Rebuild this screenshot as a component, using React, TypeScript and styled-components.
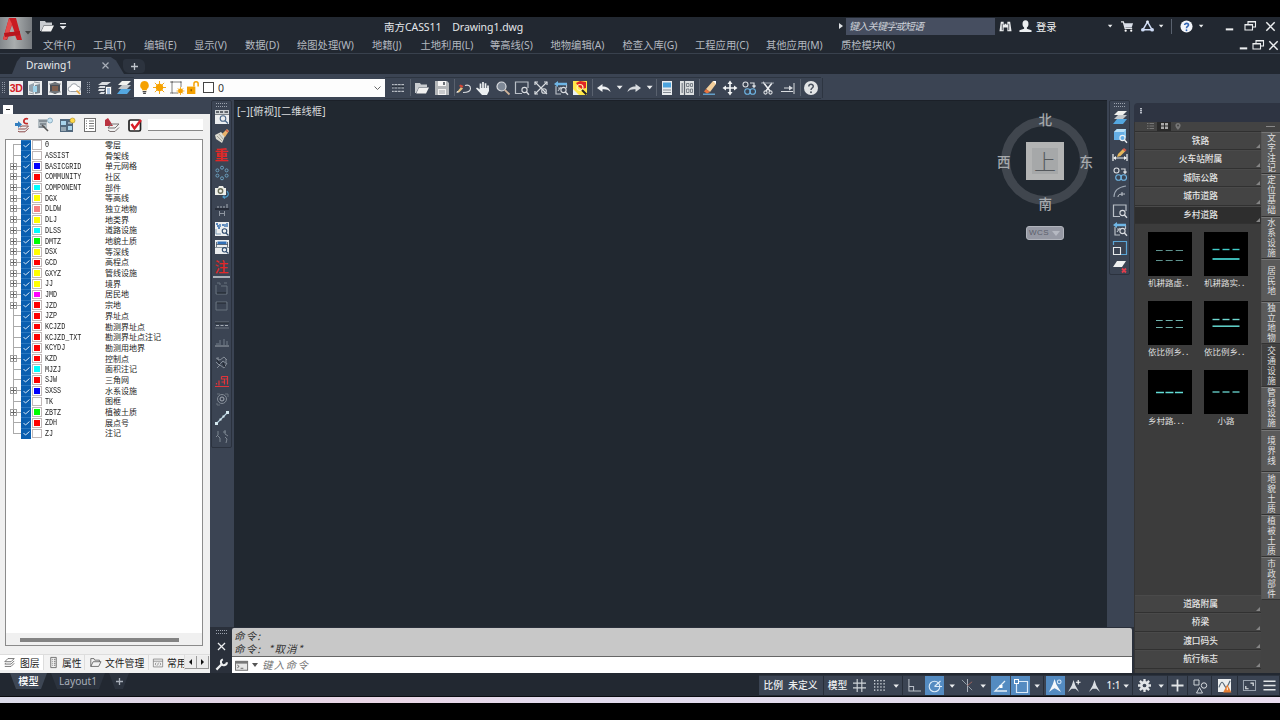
import React from "react";
import styled, { createGlobalStyle } from "styled-components";

const SANS = `"Noto Sans", "Noto Sans CJK SC", sans-serif`;
const CJK = `"Noto Sans CJK SC", sans-serif`;
const SLATE = "#3b4453";
const DARK = "#222831";

const Global = createGlobalStyle`
  * { box-sizing: border-box; }
  body { margin: 0; background: #000; overflow: hidden; font-family: ${SANS}; }
  svg { display: block; flex: none; overflow: visible; }
`;

/* ---------- icons, drawn on a 14 x 14 grid ---------- */
const W = "#d9dce0";
const B = "#6fb6e6";
const line = (d: string, c = W, w = 1.2) => <path d={d} fill="none" stroke={c} strokeWidth={w} />;
const solid = (d: string, c = W) => <path d={d} fill={c} />;
const ring = (x: number, y: number, r: number, c = W, w = 1.1) => (
  <circle cx={x} cy={y} r={r} fill="none" stroke={c} strokeWidth={w} />
);
const paper = <rect x="0" y="0" width="14" height="14" fill="#eceeef" />;
const lens = (c = W) => (
  <>
    {ring(9.5, 9, 2.6, c)}
    {line("M11.4 11L14 13.8", c, 1.4)}
  </>
);

const ICONS: Record<string, React.ReactNode> = {
  cube: <>{paper}{solid("M1 4L6 2V12L1 10Z", "#96a3ad")}{solid("M7 4l5-1v9l-5 1z", "#7b8892")}{solid("M5 5h4v6H5z", "#9ed3ea")}{line("M6 1l6 1M1 12l5 1", "#777f86", 0.8)}</>,
  block: <>{paper}{solid("M2 3l5-2 5 2v8l-5 2-5-2z", "#4b5057")}{solid("M4 5h6v5H4z", "#80604f")}{line("M1 3h12M1 11h12", "#969a9e")}</>,
  cloud: <>{paper}<path d="M3.5 10.5a2.4 2.4 0 010-4.8 3.6 3.6 0 017-.4 2.6 2.6 0 01.6 5.2z" fill="#fff" stroke="#9aa0a8" />{line("M9.5 9.5L13 13", "#e7a63a", 1.6)}</>,
  layerDoc: <>{solid("M4 1h9l-4 3H0z")}{solid("M2 5h7l-2 2H0z")}{solid("M1 8h6l-1 2H0z")}{solid("M3 11h4l-1 2H1z")}<rect x="7.5" y="5.5" width="6" height="8" fill="#fff" stroke="#555d68" />{line("M9 8h3M9 10h3M9 12h3", "#3f79b8", 0.9)}</>,
  layers: <>{solid("M5 0h9l-4 4H1z", "#f0f1ee")}{solid("M5 4h9l-4 4H1z", "#c3c8cb")}{solid("M4 8h10l-4 5H0z", "#54a7e0")}</>,
  rows: <>{line("M0 3h14M0 7h14M0 11h14", "#b8bdc4", 1.3)}{line("M0 5h14", "#20262f", 1)}{line("M2.5 1v12M6.5 1v12M10.5 1v12", SLATE, 0.8)}</>,
  open: <>{solid("M0 2h5l1 1.5h6V6H4L1 12H0z", "#c9ccd0")}{solid("M4 6.5h10L11 12.5H1.2z", "#f1f1f1")}</>,
  save: <>{solid("M0 0h12l2 2v12H0z", "#b4b7ba")}{solid("M3 0h8v5H3z", "#f6f6f6")}{solid("M8 1h2v3H8z", "#6d7278")}{solid("M3 8h8v6H3z", "#f2f2f2")}{line("M4 10h6M4 12h6", "#8f9398", 0.8)}</>,
  undoPencil: <>{line("M6 11.500c5 0 7.500-1 7.500-4S11 3.500 8 4.500", W, 1.1)}{solid("M0 11l4-5 2 1.5-4 4z", "#e7c584")}{solid("M2 5l1.5-1.5 3 1.5L5 7z", "#d64636")}{solid("M0 10l2 1-2.500 1z", "#fff")}</>,
  hand: <>{line("M4.500 9V2.500M7 8V1M9.500 8V2.200M12 9V4.500", "#eceff1", 1.7)}{solid("M1 6.500l3 2L5 7h8v3l-2 4H6L0 7.500z", "#eceff1")}</>,
  zoom: <><circle cx="5.500" cy="5.500" r="4.500" fill="#7e8896" stroke={W} strokeWidth="1.2" />{line("M8.800 8.800L13.500 13.500", "#d0b49a", 1.8)}</>,
  zoomBox: <>{line("M7 12.500H.5V1h12.500v6", "#b9bfc7")}{lens()}</>,
  zoomAll: <>{line("M1 1l12 12M13 1L1 13")}{line("M1 4V1h3M10 1h3v3M1 10v3h3")}{ring(10, 10, 2.3)}</>,
  zoomPrev: <>{line("M2 5v8h5M12.500 3v4M4 10l3-4M4 7h3", "#b9bfc7")}{solid("M0 3l4-3v1.800h9v2.400H4V6z", B)}{lens()}</>,
  zoomRed: <>{solid("M0 0h14v14H0z", "#ffe84a")}{solid("M3 2l4-2 6 1v6l-4 1-3-2z", "#e02525")}{ring(7, 6.500, 3, "#fff3b0", 1.200)}{line("M9 9l4.500 4.500", "#222", 2)}{solid("M0 8l6 6H0z", "#e9f0f4")}</>,
  undo: solid("M0 7l5.500-4v2.500c4 0 7 1.500 8 5.500-2-2.500-4.500-3-8-2.800V11z", "#eef0f2"),
  redo: solid("M14 7L8.500 3v2.500c-4 0-7 1.500-8 5.500 2-2.500 4.500-3 8-2.800V11z", "#d8dbdf"),
  tri: solid("M4 5.200h6.400L7.200 9z", "#eceef0"),
  calc: <>{solid("M2 0h10v14H2z", "#e9ecee")}{solid("M3 1.500h8v5H3z", "#4ca3dd")}{line("M3 9h8M3 11.500h8", "#838a92", 1)}</>,
  sheet: <>{solid("M0 0h14v14H0z", "#dde0e2")}{line("M4.500 0v14", "#59606a")}{line("M2.200 2v10", "#8a9098", 1.500)}<path d="M6.500 2.500h2.500v3H6.500zM10.500 2.500h2v3h-2zM6.500 8h2.500v3.500H6.500zM10.500 8h2v3.500h-2z" fill="none" stroke="#626973" strokeWidth=".8" /></>,
  pencil: <>{solid("M3 8l7-8h3v3L7 11z", "#f3cf9b")}{solid("M3 8l4 3-3 1.500-3-2z", "#e8733e")}{solid("M10 0h3v3z", "#fff")}{line("M0 13.200h12", B, 1.200)}</>,
  move: <>{line("M7 1v12M1 7h12", "#f2f4f5", 1.600)}{solid("M7-.5L9.500 3h-5zM7 14.500L4.500 11h5zM-.5 7L3 4.500v5zM14.500 7L11 4.500v5z", "#f2f4f5")}</>,
  copy: <>{ring(3.500, 3.500, 2.500)}{line("M8 2h4v4M10.500 4.500L12 6.300l1.500-1.800")}{ring(5.500, 10.500, 2.800, B)}{ring(10.700, 10.500, 2.800, B)}</>,
  cut: <>{line("M2 1l7 9M11 2L5 10", "#eef0f2", 1.500)}{ring(4.500, 11.500, 1.600)}{ring(9.500, 11.500, 1.600)}{line("M0 2h13", "#9aa1ab", 1)}</>,
  extend: <>{line("M0 10.500h12M13 2v11", W, 1)}{line("M3 7h7", W, 1)}{solid("M8 4.500l4 2.500-4 2.500z")}</>,
  help: <><circle cx="7" cy="7" r="7" fill="#e2e4e6" />{line("M4.800 5.500c0-3 4.600-2.800 4.500-.2C9.200 7 7 7 7 9", "#4b5360", 1.500)}<circle cx="7" cy="11.200" r="1" fill="#4b5360" /></>,
  codeLens: <>{paper}{solid("M0 0h14v4H0z", "#d0d4d6")}{line("M1 2h3M5 2h3M9.500 2H13", "#3c4149", 1.600)}{line("M0 4.500h14", "#4a5058", 0.7)}{ring(8, 8.500, 2.800, "#4a6788")}{line("M10 10.500l3 3", "#4a6788", 1.300)}</>,
  brush: <>{solid("M0 6l6-3 4 4-3 7-6-4z", "#dcdad0")}{solid("M7 5l5-5 2 2-4 6z", "#eab26b")}{line("M11 1l2 2", "#d65b4a", 1.600)}{line("M2 7l5 5M4 5l4 5", "#95938a", 0.8)}</>,
  dots: <>{[0, 60, 120, 180, 240, 300].map(a => <circle key={a} cx={7 + 5.300 * Math.sin(a * Math.PI / 180)} cy={7 - 5.300 * Math.cos(a * Math.PI / 180)} r="1.500" fill="none" stroke="#6ba0bf" />)}</>,
  camera: <>{solid("M0 3h3l1-2h4l1 2h2v7H0z", "#eff0ea")}{ring(5.500, 6, 2.200, "#6b6f5c", 1.400)}{line("M12 6c3 4 0 7-4 6M9.500 10.500L8 12l2 1.500", "#4e9bc9", 1.200)}</>,
  ruler: <>{line("M0 6h14", "#20252e", 1.400)}{line("M3 3v2M6 3v2M9 3v2M12 1v4", "#a6acb5", 1)}{line("M4.500 8v5M9.500 8v5M5 10.500h4", "#8e95a0", 1)}</>,
  mapA: <>{paper}{line("M1 2h2M2 4h2M5 2v3M7 3h2M10 2v3M12 1v4M3 6h2", "#2b66ab", 1.300)}{line("M1 7v5h5", "#7e9cb6", 1)}{ring(9.500, 9, 2.300, "#304c6d")}{line("M11 11l2.500 2.500", "#304c6d")}</>,
  mapB: <>{paper}{solid("M2.500 1.500h9v3h-9z", "#3270b7")}{line("M1 4.500h12M1.500 2v5M12.500 2v5", "#4a5663", 0.8)}{line("M0 7.500h14", "#6e7a83", 0.8)}{ring(9.500, 9.800, 2.200, "#304c6d")}{line("M11 11.500l2.500 2", "#304c6d")}</>,
  frameA: <>{line("M1 4v9h11V5H6M2 2h3v2M9 2h3", "#69727e", 1)}{line("M2 12h9", "#1d2229", 1)}</>,
  frameB: <>{line("M1 11V3h11v8z", "#69727e", 1)}{line("M2 4h9", "#1d2229", 0.8)}</>,
  brickA: <>{line("M0 4h14M0 10h14", "#6c7580", 1)}{line("M1 7.500h3M5.500 7.500h3M10 7.500h3", "#a6adb5", 1.200)}{line("M0 5h14", "#20262f", 1)}</>,
  brickB: <>{line("M0 10h14", "#9ba2ab", 1)}{line("M5 4v5M9 3v6M12 5v4M1 8h3", "#737d8a", 1)}</>,
  noise: <>{line("M1 3l4 2 4-3 3 3M1 7l3 3 4-4 4 3M2 13l3-3 4 3 3-5M3 2v4M11 4v4", "#858d98", 1)}{line("M2 5l3 4M8 8l2 4", "#1b2028", 1)}</>,
  redNote: <>{line("M0 12.500h14M1.500 9v1.500M4 6.500v5M6.500 2.500h6v8M6.500 2.500V5h3v5.500M6.500 8h3M12.500 5h-2", "#e0353b", 1.200)}</>,
  circleNoise: <>{ring(7, 7, 4.500, "#848c97", 1)}{ring(7, 7, 2, "#a5abb4", 1)}{line("M2 2h3M10 2h3v3M2 11v2h3", "#69717c", 1)}</>,
  diag: <>{line("M2 12L12 2", "#b9d6e6", 1.100)}{solid("M0 11h3v3H0zM11 0h3v3h-3zM7.500 4.500h2v2h-2zM4.500 7.500h2v2h-2z", "#d5e8f0")}</>,
  pins: <>{line("M3 2v4L1 8M3 7l2 2v4M10 1v4l3 2M10 8l2 2-1 4M8 3h3", "#7d8691", 1)}</>,
  sheetBlue: <>{solid("M1 3l3-3h9v8l-2 3H1z", "#83c4ee")}{solid("M4 0h9l-2 3H1z", "#b9dff6")}{solid("M1 3h10v8H1z", "#65aee5")}{lens("#eef2f5")}</>,
  dim: <>{line("M0 6v7M14 6v7M1 10h12", "#eef0f1", 1.200)}{solid("M0 10l3-2v4zM14 10l-3-2v4z", "#eef0f1")}{solid("M4 9l1-3 5-5 2.500 2-5 5z", "#e5b559")}{solid("M9.500 1.500L11 0l2.500 2L12 3.500z", "#d65b4a")}</>,
  arc: <>{line("M1 12C1 5 6 2 13 1", "#9da6b2", 1.100)}{line("M5 12c0-3 3-3 7-3M9 7v4", "#bfc5cd", 1)}</>,
  scale: <>{line("M.5 4V.5h13v13H8", "#5ba5d6", 1.200)}{line("M.5 6.500h7v7h-7z", "#e6e9eb", 1.100)}</>,
  eraseX: <>{solid("M4 1h9l-4 6H0z", "#f0f1f1")}{line("M9 8.500l4 4M13 8.500l-4 4", "#e13e4c", 1.800)}</>,
  toC: <>{solid("M0 5h3V3l4 3.500L3 10V8H0z", "#327ebf")}{line("M13 1c-5-2-6 6 0 4.500", "#c42a2a", 1.800)}{line("M5 9l2-1h6.500l-3 3H3M3 13l1 .8h6l3.500-3.500", "#8a4a4a", 1)}</>,
  bulbGrey: <>{solid("M0 1h9v9H0z", "#b4bdc2")}{line("M1 3h8M2 6h6M1 9h6", "#56616b", 1)}{line("M4 7l6 6", "#555", 1.600)}<circle cx="12" cy="2.500" r="2.500" fill="#c9e4f2" stroke="#6e98b0" strokeWidth=".7" /></>,
  bulbBlue: <>{solid("M0 1h13v13H0z", "#51687d")}{solid("M1 3h5v4H1zM8 8h4v4H8z", "#a9d4ec")}{line("M1 10h5M1 12h5M8 5h4", "#dbe4e8", 1)}<circle cx="12.500" cy="2.500" r="2.500" fill="#ffda4a" stroke="#a98b27" strokeWidth=".6" /></>,
  list: <><rect x="1.500" y=".5" width="11" height="13" fill="#fff" stroke="#717171" />{line("M3 3h1M6 3h5M3 5.500h1M6 5.500h5M3 8h1M6 8h5M3 10.500h1M6 10.500h5", "#777", 1)}</>,
  redLayer: <>{solid("M0 8V2l3-2 2 3 3 5z", "#ba3340")}{line("M3 10l3-4h8l-4 4zM3 12l2 1.500h5l4-4", "#7b7373", 1)}</>,
  check: <><rect x="1" y="2" width="11.500" height="11" rx="1.500" fill="#fff" stroke="#222" strokeWidth="1.700" />{line("M3.500 6l3 4.500L13 2", "#d81e28", 2.400)}</>,
  bulb: <>{solid("M7 0a4.800 4.800 0 00-2.600 8.700V10h5.200V8.700A4.800 4.800 0 007 0z", "#f5a100")}{line("M5 11.500h4M5.500 13.300h3", "#4a4a4a", 1.200)}</>,
  sun: <><circle cx="7" cy="7" r="4" fill="#f5a100" />{line("M7 0v14M0 7h14M2 2l10 10M12 2L2 12", "#f5a100", 1)}</>,
  freeze: <>{line("M2 1h9M2 1v11h6M11 1v5M0 1h3M0 12h3M2 0v2M11 0v2", "#6f6f6f", 0.9)}<circle cx="10.500" cy="10" r="2.400" fill="#f5a100" />{line("M10.500 6v8M6.500 10h8M7.800 7.300l5.400 5.400M13.200 7.300l-5.400 5.400", "#f5a100", 0.8)}</>,
  lock: <>{solid("M0 6h9v8H0z", "#f5a100")}{line("M7.500 6V3a2.200 2.200 0 014.500 0v3", "#f5a100", 1.600)}{line("M4.500 9v2", "#7a4d00", 1.300)}</>,
  binoc: <>{solid("M2 2h3v3h1V4h2v1h1V2h3l1.500 10H9V8H5v4H.5z", "#eceef0")}{line("M3.500 4v7M10.500 4v7", "#222831", 0.8)}</>,
  user: <><ellipse cx="7" cy="4.300" rx="3.200" ry="3.900" fill="#eceef0" />{solid("M5.500 7h3v2.500l5 1.500V13H.5v-2l5-1.500z", "#eceef0")}</>,
  cart: <>{line("M0 2h2.500l2 7h7.500", "#e3e6ea", 1.500)}{solid("M3 3.500h10L11.500 8h-7z", "#dbe0ea")}<circle cx="5" cy="11.500" r="1.200" fill="#fff" /><circle cx="11" cy="11.500" r="1.200" fill="#fff" /></>,
  apps: <>{line("M7 2L2 10.500h10z", "#cfdcf5", 1.600)}<circle cx="7" cy="2" r="1.500" fill="#e5edfa" /><circle cx="2" cy="10.500" r="2" fill="#cfdcf5" /><circle cx="12" cy="10.500" r="2" fill="#cfdcf5" /></>,
  helpBlue: <><circle cx="7" cy="7" r="6.500" fill="#f4f6fa" />{line("M5 5.500c0-2.500 4.200-2.500 4.200 0C9.200 7 7 7 7 8.800", "#3467b5", 1.700)}<circle cx="7" cy="11" r="1" fill="#3467b5" /></>,
  min: solid("M3 9h8v2.200H3z", "#eceef0"),
  restore: <>{line("M5 5V2.500h7.500v5.500H10M2 5.500h7.500V11H2z", "#eceef0", 1.100)}{line("M2 5.800h7.500M5 2.700h7.500", "#eceef0", 1.600)}</>,
  close: line("M2.500 2.500l9 9M11.500 2.500l-9 9", "#eceef0", 1.600),
  wrench: <>{line("M1.500 12.500L8 6", "#eceef0", 2.400)}{line("M12.800 4.500A3.200 3.200 0 118.500 1.500", "#eceef0", 2.200)}</>,
  prompt: <><rect x=".6" y="2.600" width="13" height="9.500" fill="#e6e6e6" stroke="#666" />{solid("M.5 2h13.200v3H.5z", "#777")}{line("M2.500 6.500l2 1.500-2 1.500M6 10h3", "#555", 0.9)}</>,
  tabLayers: <>{line("M1 6l4-4h8L9 6zM1 9l1-1M1 9h8l4-4M1 12h8l4-4", "#555", 1)}</>,
  tabProps: <>{line("M3.500.5h7v13h-7zM5 3h1M7.500 3h2M5 5.500h1M7.500 5.500h2M5 8h1M7.500 8h2M5 10.500h1M7.500 10.500h2", "#555", 1)}</>,
  tabFolder: <>{line("M1 12V2h4l1 2h6v2M1 12l3-6h10l-3 6z", "#555", 1)}</>,
  tabCode: <>{line("M.5 1.500h13v11H.5zM.5 4.500h13M4.500 6.500L3 8.500l1.500 2M9.500 6.500l1.500 2-1.500 2M7.500 6.500l-1 4", "#666", 0.9)}</>,
  grid: line("M4.500 0v14M9.500 0v14M0 4.500h14M0 9.500h14", "#d0d5da", 1.200),
  dotgrid: <>{[1, 5, 9, 13].map(y => [1, 5, 9, 13].map(x => <rect key={`${x}-${y}`} x={x - 1} y={y - 1} width="1.700" height="1.700" fill="#d8dde2" />))}</>,
  ortho: line("M1 0v13h13M1 8h5v5", "#b9bfc8", 1.100),
  polar: <>{ring(6.500, 7.500, 5.300, "#dcebf8")}{line("M6.500 7.500h7.500M6.500 7.500L12.500 2", "#dcebf8")}</>,
  iso: <>{line("M7 0v14", "#b0b7c0", 1)}{line("M1 1l5 5M8 8l4 4", "#9aa4ae", 1)}{line("M7 7l5-4", "#a2655e", 1)}</>,
  snapTrack: <>{line("M13 12H1L11 2", "#e3eff8", 1.300)}<rect x="5.500" y="6" width="3" height="3" fill="#fff" /></>,
  osnap: <>{line("M2.500 2.500h11v11h-11z", "#dcebf8", 1.200)}<rect x=".5" y=".5" width="4" height="4" fill="#548bc1" stroke="#fff" /></>,
  annoA: <>{solid("M6 0l2 6 5 8-5-3-2-1-2 1-4 3 4-8z", "#f3f7fb")}{ring(11, 3, 2, "#d9eafa")}</>,
  annoB: <>{solid("M6 1l2 6 4 7-4-3.500H4L0 14l4-7z", "#dadee3")}{line("M11 1v5M8.500 3.500h5", "#fff", 1.200)}</>,
  annoC: solid("M7 1l2 6 4 7-4-3.500H5L1 14l4-7z", "#dadee3"),
  gear: <>{line("M7 0v14M0 7h14M2 2l10 10M12 2L2 12", "#e2e5e8", 2.500)}<circle cx="7" cy="7" r="4.800" fill="#e2e5e8" /><circle cx="7" cy="7" r="2" fill={SLATE} /></>,
  plus: line("M7 .5v13M.5 7h13", "#e2e5e8", 1.900),
  shapes: <>{line("M1 1h5v5H1zM6.500 8.500L3.500 14h6z", "#cdd2d8", 1)}{ring(11, 6.500, 2.700, W, 1)}</>,
  perf: <>{paper}{line("M1 9c3-8 4-6 6-2s3 2 6-5", "#5a6a79", 1.300)}{solid("M10 6l4.500 8.500h-9z", "#e57d32")}{line("M10 9v3", "#fff", 1)}</>,
  full: <>{line("M.5 1.500h13v11H.5z", "#99a2ae", 1.100)}{line("M8 4.500h3v3M3 7.500v3h3", "#dfe3e7", 1.300)}</>,
  burger: line("M.5 2.500h13M.5 7h13M.5 11.500h13", "#e2e5e8", 1.700),
};

const Icon = ({ n, s = 14 }: { n: string; s?: number }) => (
  <svg width={s} height={s} viewBox="0 0 14 14">{ICONS[n]}</svg>
);

/* ---------- shared pieces ---------- */
const Cell = styled.div<{ $w?: number; $h?: number; $ml?: number; $on?: boolean }>`
  flex: none;
  width: ${p => p.$w ?? 19.5}px;
  height: ${p => (p.$h ? `${p.$h}px` : "auto")};
  margin-left: ${p => p.$ml ?? 0}px;
  display: flex;
  align-items: center;
  justify-content: center;
  background: ${p => (p.$on ? "#548bc1" : "transparent")};
`;
const Glyph = styled.span<{ $size: number; $bold?: boolean }>`
  font: ${p => (p.$bold ? 700 : 500)} ${p => p.$size}px/1 "Noto Sans CJK SC", sans-serif;
  color: #e12828;
`;
const Page = styled.div`
  width: 1280px; height: 720px; padding-top: 17px;
  display: flex; flex-direction: column; background: #000; overflow: hidden;
`;

/* ---------- header ---------- */
const Header = styled.header`
  height: 36.500px; flex: none; display: flex; background: ${DARK};
  border-bottom: 1px solid #39414d;
`;
const Logo = styled.div`
  width: 32px; height: 32px; flex: none;
  background: linear-gradient(90deg, #83888c, #a9adae 45%, #777b7f);
`;
const HeadRows = styled.div`flex: 1; display: flex; flex-direction: column;`;
const TitleRow = styled.div`height: 18px; display: flex; align-items: center; color: #e4e7ea;`;
const Title = styled.div`
  width: 455px; margin-left: 314px; padding-top: 2px; font-size: 10.500px; line-height: 18px; letter-spacing: -.05px; white-space: pre;
`;
const Search = styled.div`
  width: 149px; height: 17px; margin-left: 4px; padding-left: 3px; background: #464e60;
  font: italic 10px/15px ${CJK}; letter-spacing: -.7px; color: #cdd1d8;
`;
const Login = styled.div`width: 60px; font: 10.300px/15px ${CJK}; margin-left: 4px; color: #f1f2f3;`;
const VLine = styled.i<{ $h: number; $ml?: number; $c?: string }>`
  width: 1px; height: ${p => p.$h}px; margin-left: ${p => p.$ml ?? 0}px; flex: none; background: ${p => p.$c ?? "#59616e"};
`;
const MenuRow = styled.nav`height: 20px; display: flex; align-items: center; padding-left: 11px;`;
const MenuItem = styled.span<{ $w: number }>`
  width: ${p => p.$w}px; flex: none; font-size: 10.300px; line-height: 20px; color: #b4b9c0; white-space: nowrap;
`;
const MENUS: [string, number][] = [
  ["文件(F)", 50], ["工具(T)", 51], ["编辑(E)", 50], ["显示(V)", 51], ["数据(D)", 52], ["绘图处理(W)", 75],
  ["地籍(J)", 48.500], ["土地利用(L)", 69.500], ["等高线(S)", 60.500], ["地物编辑(A)", 72], ["检查入库(G)", 72.500],
  ["工程应用(C)", 71], ["其他应用(M)", 75], ["质检模块(K)", 395],
];

/* ---------- file tabs ---------- */
const FileTabs = styled.div`height: 20.500px; flex: none; display: flex; align-items: flex-end; background: ${DARK}; padding-left: 12px;`;
const FileTab = styled.div`
  width: 112px; height: 17.500px; padding: 0 15px 0 14px; display: flex; justify-content: space-between; align-items: center;
  background: ${SLATE}; clip-path: polygon(5px 5px, 9px 0, 98px 0, 104px 4px, 112px 100%, 0 100%);
  font-size: 10.200px; line-height: 18px; color: #e8eaed;
`;
const NewTab = styled.div`
  width: 22px; height: 14px; margin: 0 0 1px -1px; display: flex; align-items: center; justify-content: center;
  background: #2c333e; border-radius: 3px 6px 4px 6px;
`;

/* ---------- main toolbar ---------- */
const ToolBand = styled.div`height: 26px; flex: none; background: ${SLATE}; display: flex; align-items: center; padding-top: 1px;`;
const Group = styled.div<{ $w: number; $pl?: number }>`
  width: ${p => p.$w}px; height: 22px; flex: none; display: flex; align-items: center; padding-left: ${p => p.$pl ?? 0}px;
  border: solid #2d3541; border-width: 1px 0;
`;
const Grip = styled.i`
  width: 3px; height: 12px; margin-right: 4px; flex: none;
  background: repeating-linear-gradient(#8e96a3 0 1px, transparent 1px 2px);
  mask: linear-gradient(90deg, #000 1px, transparent 1px 2px, #000 2px);
`;
const ThreeD = styled.b`
  width: 14px; height: 14px; background: #eee; color: #d42027; font: 700 10.500px/14px "Liberation Sans", sans-serif;
  display: flex; justify-content: center; letter-spacing: -.4px;
`;
const Combo = styled.div`
  width: 251px; height: 18px; flex: none; background: #fdfdfd; display: flex; align-items: center; padding-left: 2px;
  color: #333; font: 10.500px/18px ${SANS};
`;
const Swatch = styled.i<{ $c: string; $s: number }>`
  width: ${p => p.$s}px; height: ${p => p.$s}px; flex: none; background: ${p => p.$c}; border: 1px solid #444;
`;

/* ---------- body ---------- */
const Body = styled.div`height: 573px; flex: none; display: flex; background: ${SLATE};`;
const LeftPanel = styled.aside`width: 210px; flex: none; display: flex; flex-direction: column;`;
const PanelCap = styled.div`height: 14px; flex: none; display: flex; align-items: flex-end; padding-left: 3px;`;
const Chip = styled.div`
  width: 10px; height: 9px; background: #fff; display: flex; align-items: center; justify-content: center;
  &::after { content: ""; width: 4px; height: 1px; background: #333; }
`;
const PanelBody = styled.div`flex: 1; background: #f0f0f0; display: flex; flex-direction: column;`;
const PanelTools = styled.div`height: 24.500px; flex: none; display: flex; align-items: center; padding: 0 7px 2px 11px;`;
const Input = styled.div`width: 55px; height: 12px; margin-left: 2px; background: #fff; border-bottom: 1px solid #888;`;
const Tree = styled.div`
  width: 198px; height: 507.500px; margin-left: 5px; flex: none; background: #fff; border: 1px solid #8b8b8b; border-top-width: .5px;
  display: flex; flex-direction: column;
`;
const Row = styled.div`height: 10.690px; flex: none; display: flex; align-items: center;`;
const Branch = styled.div<{ $first?: boolean; $last?: boolean }>`
  width: 15px; height: 100%; display: flex; align-items: center; padding-left: 4px; flex: none;
  background:
    linear-gradient(#aaa, #aaa) 7px ${p => (p.$first ? "100%" : "0")} / 1px ${p => (p.$first || p.$last ? "50%" : "100%")} no-repeat,
    linear-gradient(90deg, #aaa, #aaa) 7px 50% / 8px 1px no-repeat;
`;
const Expander = styled.i`
  width: 7px; height: 7px; border: 1px solid #a0a0a0;
  background: linear-gradient(#666,#666) center / 5px 1px no-repeat, linear-gradient(#666,#666) center / 1px 5px no-repeat, #fff;
`;
const Tick = styled.div`
  width: 10px; height: 100%; flex: none; background: #0a5fb0; display: flex; align-items: center; justify-content: center;
  border-top: 1px solid #2b78c0;
`;
const ColorBox = styled.i<{ $c: string }>`
  width: 10px; height: 9.700px; margin-left: 1px; border: 1px solid #c0b8b8; padding: 1px; background: ${p => p.$c} content-box; flex: none;
`;
const Code = styled.div`
  width: 60px; height: 10px; margin-left: 3px; flex: none; display: flex; align-items: center;
  span { font: 8.300px/9px "Liberation Mono", monospace; color: #222; transform: scaleX(.81); transform-origin: 0 50%; }
`;
const LayerName = styled.div`height: 10px; font: 8px/9px ${CJK}; color: #1c1c1c; white-space: nowrap;`;
const ScrollTrack = styled.div`margin-top: auto; height: 12px; background: #f0f0f0; padding: 4.500px 0 0 14px;`;
const ScrollThumb = styled.div`width: 159px; height: 4px; background: #838383;`;
const PanelTabs = styled.div`height: 16px; margin-top: 8px; display: flex; align-items: center; border-top: 1px solid #ddd; overflow: hidden;`;
const PanelTab = styled.div<{ $w: number; $active?: boolean; $gap?: number; $pl?: number }>`
  width: ${p => p.$w}px; height: 16px; flex: none; display: flex; align-items: center; gap: ${p => p.$gap ?? 5}px; padding-left: ${p => p.$pl ?? 4}px;
  font: 9.800px/14px ${CJK}; color: #222; white-space: nowrap; overflow: hidden; border-right: 1px solid #ddd;
  background: ${p => (p.$active ? "#fff" : "#f3f3f3")};
`;
const Arrow = styled.div<{ $flip?: boolean }>`
  width: 12px; height: 13px; flex: none; background: #ececec; border: 1px solid #999; border-width: 0 1px 1px 0; display: flex; align-items: center; justify-content: center;
  &::after { content: ""; border: 3px solid transparent; border-${p => (p.$flip ? "left" : "right")}-color: #111; border-${p => (p.$flip ? "right" : "left")}-width: 0; }
`;

const LAYERS: [string, string, string, number][] = [
  ["0", "零层", "#fff", 0], ["ASSIST", "骨架线", "#fff", 0], ["BASICGRID", "单元网格", "#00f", 1], ["COMMUNITY", "社区", "#f00", 1],
  ["COMPONENT", "部件", "#0ff", 1], ["DGX", "等高线", "#ff0", 1], ["DLDW", "独立地物", "#f77f7f", 1], ["DLJ", "地类界", "#ff0", 1],
  ["DLSS", "道路设施", "#0ff", 1], ["DMTZ", "地貌土质", "#0f0", 1], ["DSX", "等深线", "#ff0", 1], ["GCD", "高程点", "#f00", 1],
  ["GXYZ", "管线设施", "#ff0", 1], ["JJ", "境界", "#ff0", 1], ["JMD", "居民地", "#f0f", 1], ["JZD", "宗地", "#f00", 1],
  ["JZP", "界址点", "#f00", 0], ["KCJZD", "勘测界址点", "#f00", 0], ["KCJZD_TXT", "勘测界址点注记", "#f00", 0], ["KCYDJ", "勘测用地界", "#f00", 0],
  ["KZD", "控制点", "#f00", 1], ["MJZJ", "面积注记", "#0ff", 0], ["SJW", "三角网", "#f00", 0], ["SXSS", "水系设施", "#00f", 1],
  ["TK", "图框", "#fff", 0], ["ZBTZ", "植被土质", "#0f0", 1], ["ZDH", "展点号", "#f00", 0], ["ZJ", "注记", "#fff", 0],
];

const Center = styled.main`width: 924px; flex: none; display: flex; flex-direction: column;`;
const Workspace = styled.div`height: 527px; flex: none; display: flex;`;
const VBar = styled.div<{ $h: number; $ml: number; $mr: number }>`
  width: 21px; height: ${p => p.$h}px; margin: 0 ${p => p.$mr}px 0 ${p => p.$ml}px; flex: none; display: flex; flex-direction: column; align-items: center;
  border: 1px solid #2b323e; border-radius: 2px; background: ${SLATE};
`;
const HGrip = styled.i`
  width: 12px; height: 4px; margin-top: 2px; flex: none;
  background: repeating-linear-gradient(90deg, #9ca3ae 0 1px, transparent 1px 2px);
  mask: repeating-linear-gradient(#000 0 1px, transparent 1px 3px);
`;
const HRule = styled.i`width: 17px; height: 2px; flex: none; background: #aab0b8; margin: 1px 0 0;`;
const Canvas = styled.section`width: 873px; flex: none; position: relative; background: #212830; border-top: 1px solid #1b2028;`;
const ViewLabel = styled.div`padding: 2px 0 0 3px; font: 10.200px/16px ${SANS}; color: #d9dcde; letter-spacing: .12px;`;
const Compass = styled.div`position: absolute; left: 757px; top: 8px; width: 108px; height: 106px; color: #a6a9ad; font: 500 13.500px/16px ${CJK};`;
const Ring = styled.div`position: absolute; left: 10px; top: 7.500px; width: 88px; height: 88px; border: 9.500px solid #40464e; border-radius: 50%;`;
const Dir = styled.span<{ $x: number; $y: number }>`position: absolute; left: ${p => p.$x}px; top: ${p => p.$y}px;`;
const Cube = styled.div`
  position: absolute; left: 35px; top: 33px; width: 38px; height: 38px; background: #b3b4b4; padding: 6px;
  div { height: 26px; background: #a6a8a9; color: #55595d; font: 300 22px/24px "Noto Sans CJK SC", sans-serif; text-align: center; }
`;
const Wcs = styled.div`
  position: absolute; left: 792px; top: 125px; width: 38px; height: 14px; border-radius: 3px; background: #9699a4; border: 1px solid #b1b4bc;
  color: #5b606c; font: 8px/12px "Liberation Sans", sans-serif; padding-left: 2px; letter-spacing: .4px;
  &::after { content: ""; position: absolute; right: 3px; top: 4px; border: 4px solid transparent; border-top: 5px solid #b6b9c2; border-bottom: 0; }
`;
const Command = styled.div`height: 46px; display: flex; padding-left: 1px; background: #2a303b;`;
const CmdSide = styled.div`width: 21px; flex: none; display: flex; flex-direction: column; align-items: center; justify-content: space-between; padding: 1px 0 2px;`;
const CmdMain = styled.div`width: 900px; margin: 1px 0 0 0; display: flex; flex-direction: column;`;
const CmdLog = styled.div`
  height: 28px; background: #c8c8c8; border-radius: 2px 2px 0 0; padding: 1px 0 0 2px; font: italic 10.500px/13px ${CJK}; color: #333; white-space: pre; overflow: hidden;
  div { letter-spacing: 1.150px; }
`;
const CmdInput = styled.div`
  height: 17px; background: #fff; border-top: 1px solid #666; display: flex; align-items: center; padding-left: 3px; gap: 1px;
  font: italic 10.500px/14px ${CJK}; letter-spacing: 1.300px; color: #777;
`;

/* ---------- symbol palette ---------- */
const Palette = styled.aside`width: 146px; flex: none; display: flex; flex-direction: column; padding-top: 3px;`;
const PalTitle = styled.div`
  height: 18.500px; flex: none; background: #2e3442; border-radius: 4px 0 0 0; padding: 5px 0 0 6px;
  &::after { content: ""; display: block; width: 2px; height: 6px; background: repeating-linear-gradient(#b7bbc4 0 1px, #6b7280 1px 2px); }
`;
const PalBody = styled.div`height: 551.500px; display: flex; background: #434343;`;
const PalMain = styled.div`width: 127px; display: flex; flex-direction: column; border-left: 1px solid #343434;`;
const PalTools = styled.div`height: 10px; flex: none; display: flex; padding-left: 8px; border-bottom: 1px solid #303030;`;
const PalCell = styled.div<{ $on?: boolean }>`width: 14px; height: 9px; display: flex; align-items: center; justify-content: center; background: ${p => (p.$on ? "#2a2a2a" : "transparent")};`;
const PalRow = styled.div<{ $on?: boolean }>`
  height: 18.600px; flex: none; border-bottom: 1px solid #313131; border-top: 1px solid #4a4a4a; text-align: center; position: relative; padding-left: 5px;
  background: ${p => (p.$on ? "#2e2e2e" : "#444")}; font: 500 8.700px/16px ${CJK}; color: #e4e4e4;
  &::after { content: ""; position: absolute; right: 1px; bottom: 1px; border: solid transparent; border-width: 4px 0 0 4px; border-right: 0; border-bottom: 4px solid #858585; border-top: 0; }
`;
const Symbols = styled.div`
  flex: 1; background: #3c3c3c; display: grid; grid-template-columns: 44px 44px; column-gap: 12px; grid-auto-rows: 69px; padding: 8px 0 0 13px; align-content: start;
`;
const Symbol = styled.div<{ $mid?: boolean }>`
  svg { background: #000; }
  div {
    width: ${p => (p.$mid ? 44 : 48)}px; text-align: ${p => (p.$mid ? "center" : "left")};
    font: 8.500px/12px ${CJK}; color: #dcdcdc; white-space: nowrap;
  }
  span { letter-spacing: 1.600px; }
`;
const Side = styled.div`width: 19px; display: flex; flex-direction: column;`;
const SideHead = styled.div`height: 10px; flex: none; padding: 4px 5px; &::after { content: ""; display: block; height: 1px; background: #888; }`;
const SideTab = styled.div<{ $on?: boolean }>`
  height: 42.600px; flex: none; border-top: 1px solid ${p => (p.$on ? "#444" : "#767676")}; border-bottom: 1px solid #333; border-left: 1px solid #555;
  background: ${p => (p.$on ? "#404040" : "#5a5a5a")}; display: flex; align-items: center; justify-content: center;
  writing-mode: vertical-rl; text-orientation: upright; font: 8.600px/17px ${CJK}; letter-spacing: 1.400px; white-space: nowrap; color: #e0e0e0;
`;

/* ---------- status bar ---------- */
const Status = styled.footer`height: 24px; flex: none; display: flex; background: ${DARK}; border-bottom: 1.500px solid #0a0c10; padding-left: 10px;`;
const LayoutTabs = styled.div`width: 749px; display: flex; align-items: flex-start;`;
const LayoutTab = styled.div<{ $w: number; $on?: boolean }>`
  width: ${p => p.$w}px; height: 16px; margin-right: 4px; display: flex; align-items: center; justify-content: center;
  clip-path: polygon(0 0, 100% 0, calc(100% - 6px) 100%, 6px 100%);
  background: ${p => (p.$on ? "#3d4654" : "#2c333e")}; color: ${p => (p.$on ? "#fff" : "#a9b0ba")};
  font: ${p => (p.$on ? 500 : 400)} 10.200px/15px ${SANS};
`;
const StatusGroup = styled.div<{ $w: number }>`
  width: ${p => p.$w}px; height: 20px; margin-top: 2px; flex: none; display: flex; align-items: center; background: ${SLATE};
  border-right: 1.500px solid #272e39; border-top: 1px solid #2b323d; font: 500 9.800px/18px ${SANS}; color: #eceef0; white-space: pre;
`;
const Strip = styled.div`height: 6px; flex: none; background: linear-gradient(90deg, #dcdcea 0, #e2d5e6 15%, #ead6e6 30%, #e2dbee 45%, #e4dcea 80%, #eaddf0);`;

const SYMBOLS: [string, string, React.ReactNode][] = [
  ["机耕路虚", "..", <>{line("M8 18.500h27M8 28.500h27", "#5f938f", 1.200)}{line("M16.200 18v12M26.200 18v12", "#000", 3)}</>],
  ["机耕路实", "..", <>{line("M8.500 17.500h27", "#42cbc8", 1.400)}{line("M17 16v3M27 16v3", "#000", 3)}{line("M8.500 27h27", "#42cbc8", 1.800)}</>],
  ["依比例乡", "..", <>{line("M8 19.500h27M8 26.500h27", "#70b3ad", 1.100)}{line("M16.200 18v10M26.200 18v10", "#000", 3)}</>],
  ["依比例乡", "..", <>{line("M8.500 18.500h27", "#6fd6cf", 1.400)}{line("M17 17v3M27 17v3", "#000", 3)}{line("M8.500 25.200h27", "#64d8d0", 1.500)}</>],
  ["乡村路", "...", <>{line("M8 22.500h27", "#62dcd6", 1.500)}{line("M16.700 21v3M26.200 21v3", "#000", 1.500)}</>],
  ["小路", "", <>{line("M8.500 22h27", "#62c9c3", 1.400)}{line("M17 20v4M27 20v4", "#000", 3)}</>],
];
const SIDE_TABS = ["文字注记", "定位基础", "水系设施", "居民地", "独立地物", "交通设施", "管线设施", "境界线", "地貌土质", "植被土质", "市政部件"];

const Sep = ({ ml = 0 }: { ml?: number }) => <VLine $h={17} $ml={ml} />;
const Tools = ({ names, w, h }: { names: string[]; w?: number; h?: number }) => (
  <>{names.map((n, i) => <Cell key={i} $w={w} $h={h}><Icon n={n} /></Cell>)}</>
);

export default function App() {
  return (
    <Page>
      <Global />
      <Header>
        <Logo>
          <svg width="32" height="32" viewBox="0 0 32 32">
            <path d="M9 1h7l6 22h-5l-2-5H9l-2 5-4-1z" fill="#c91b22" />
            <path d="M9 1l3 6-5 15-4 1z" fill="#e54b4b" />
            <path d="M12 8l2.500 7H9.500z" fill="#a8aaab" />
            <path d="M4 16l16-2v4L5 20z" fill="#b8161e" />
            <path d="M25 14h6l-3 3.500z" fill="#444" />
          </svg>
        </Logo>
        <HeadRows>
          <TitleRow>
            <Cell $w={14} $ml={8}><Icon n="open" /></Cell>
            <Cell $w={14} $ml={2}>
              <svg width="8" height="7" viewBox="0 0 8 7"><path d="M1 0h6v1.300H1zM.8 3h6.600L4 6.500z" fill="#e6e8eb" /></svg>
            </Cell>
            <Title>{"南方CASS11    Drawing1.dwg"}</Title>
            <Cell $w={3}><svg width="4" height="6" viewBox="0 0 4 6"><path d="M0 0l4 3-4 3z" fill="#dfe2e5" /></svg></Cell>
            <Search>键入关键字或短语</Search>
            <Cell $w={14} $ml={3}><Icon n="binoc" s={13} /></Cell>
            <Cell $w={14} $ml={6}><Icon n="user" s={13} /></Cell>
            <Login>登录</Login>
            <Cell $w={14} $ml={7}><Icon n="tri" s={10} /></Cell>
            <Cell $w={14} $ml={3}><Icon n="cart" s={13} /></Cell>
            <Cell $w={14} $ml={6}><Icon n="apps" s={13} /></Cell>
            <Cell $w={10} $ml={2}><Icon n="tri" s={10} /></Cell>
            <VLine $h={15} $ml={5} />
            <Cell $w={14} $ml={7}><Icon n="helpBlue" s={13} /></Cell>
            <Cell $w={12} $ml={2}><Icon n="tri" s={10} /></Cell>
            <Cell $w={14} $ml={15}><Icon n="min" s={13} /></Cell>
            <Cell $w={14} $ml={7}><Icon n="restore" s={14} /></Cell>
            <Cell $w={14} $ml={6}><Icon n="close" s={13} /></Cell>
          </TitleRow>
          <MenuRow>
            {MENUS.map(([t, w]) => <MenuItem key={t} $w={w}>{t}</MenuItem>)}
            <Cell $w={15}><Icon n="min" s={13} /></Cell>
            <Cell $w={14}><Icon n="restore" s={14} /></Cell>
            <Cell $w={14} $ml={1}><Icon n="close" s={13} /></Cell>
          </MenuRow>
        </HeadRows>
      </Header>

      <FileTabs>
        <FileTab>
          Drawing1
          <svg width="7" height="7" viewBox="0 0 7 7"><path d="M.5.5l6 6M6.500.5l-6 6" stroke="#a9afb9" strokeWidth="1.200" /></svg>
        </FileTab>
        <NewTab><svg width="7" height="7" viewBox="0 0 7 7"><path d="M3.500 0v7M0 3.500h7" stroke="#c0c5cc" strokeWidth="1.300" /></svg></NewTab>
      </FileTabs>

      <ToolBand>
        <Group $w={84} $pl={2}>
          <Grip />
          <Cell $w={14}><ThreeD>3D</ThreeD></Cell>
          <Cell $w={2.500} />
          <Tools names={["cube", "block", "cloud"]} />
        </Group>
        <Group $w={50} $pl={3}>
          <Grip />
          <Cell $w={1} />
          <Tools names={["layerDoc", "layers"]} />
        </Group>
        <Combo>
          <Cell $w={16}><Icon n="bulb" s={13} /></Cell>
          <Cell $w={14}><Icon n="sun" s={13} /></Cell>
          <Cell $w={21}><Icon n="freeze" s={14} /></Cell>
          <Cell $w={13}><Icon n="lock" s={13} /></Cell>
          <Cell $w={15} $ml={1}><Swatch $c="#fff" $s={11} /></Cell>
          <Cell $w={10}>0</Cell>
          <Cell $w={12} $ml={145}>
            <svg width="7" height="4" viewBox="0 0 7 4"><path d="M.5.5l3 3 3-3" fill="none" stroke="#666" /></svg>
          </Cell>
        </Combo>
        <Group $w={436} $pl={3}>
          <Cell><Icon n="rows" s={12} /></Cell>
          <Sep ml={2} />
          <Cell $w={1} />
          <Tools names={["open", "save"]} w={20} />
          <Sep ml={2} />
          <Tools names={["undoPencil", "hand", "zoom", "zoomBox", "zoomAll", "zoomPrev", "zoomRed"]} w={19.300} />
          <Sep ml={2} />
          <Cell $w={2} />
          <Cell $w={18}><Icon n="undo" /></Cell>
          <Cell $w={13}><Icon n="tri" s={13} /></Cell>
          <Cell $w={17}><Icon n="redo" /></Cell>
          <Cell $w={13}><Icon n="tri" s={13} /></Cell>
          <Sep />
          <Tools names={["calc", "sheet"]} w={20} />
          <Sep ml={2} />
          <Cell $w={1} />
          <Tools names={["pencil", "move", "copy", "cut", "extend"]} w={19.400} />
          <Sep ml={2} />
          <Cell $w={21}><Icon n="help" s={14} /></Cell>
          <VLine $h={20} $c="#2d3541" />
        </Group>
      </ToolBand>

      <Body>
        <LeftPanel>
          <PanelCap><Chip /></PanelCap>
          <PanelBody>
            <PanelTools>
              <Tools names={["toC", "bulbGrey", "bulbBlue", "list", "redLayer", "check"]} w={22.500} />
              <Input />
            </PanelTools>
            <Tree>
              {LAYERS.map(([code, name, color, exp], i) => (
                <Row key={code}>
                  <Branch $first={i === 0} $last={i === LAYERS.length - 1}>{exp ? <Expander /> : null}</Branch>
                  <Tick><svg width="7" height="5" viewBox="0 0 7 5"><path d="M.5 2l2 2L6.500.5" fill="none" stroke="#cfe3f5" /></svg></Tick>
                  <ColorBox $c={color} />
                  <Code><span>{code}</span></Code>
                  <LayerName>{name}</LayerName>
                </Row>
              ))}
              <ScrollTrack><ScrollThumb /></ScrollTrack>
            </Tree>
            <PanelTabs>
              <PanelTab $w={44} $active><Icon n="tabLayers" s={11} />图层</PanelTab>
              <PanelTab $w={41} $gap={3}><Icon n="tabProps" s={11} />属性</PanelTab>
              <PanelTab $w={64} $gap={4} $pl={5}><Icon n="tabFolder" s={11} />文件管理</PanelTab>
              <PanelTab $w={36} $pl={4} $gap={4}><Icon n="tabCode" s={10} />常用</PanelTab>
              <Arrow />
              <Arrow $flip />
            </PanelTabs>
          </PanelBody>
        </LeftPanel>

        <Center>
          <Workspace>
            <VBar $h={348} $ml={1} $mr={2}>
              <HGrip />
              <Cell $h={1} />
              <Tools names={["codeLens", "brush"]} h={18.600} />
              <Cell $h={18.600}><Glyph $size={14} $bold>重</Glyph></Cell>
              <Tools names={["dots", "camera", "ruler", "mapA", "mapB"]} h={18.600} />
              <Cell $h={18.600}><Glyph $size={14}>注</Glyph></Cell>
              <HRule />
              <Tools names={["frameA", "frameB", "brickA", "brickB", "noise", "redNote", "circleNoise", "diag", "pins"]} h={18.600} />
            </VBar>
            <Canvas>
              <ViewLabel>[−][俯视][二维线框]</ViewLabel>
              <Compass>
                <Ring />
                <Dir $x={47.500} $y={2}>北</Dir>
                <Dir $x={6} $y={44}>西</Dir>
                <Dir $x={88.500} $y={44}>东</Dir>
                <Dir $x={47.500} $y={86}>南</Dir>
                <Cube><div>上</div></Cube>
              </Compass>
              <Wcs>WCS</Wcs>
            </Canvas>
            <VBar $h={175} $ml={2} $mr={4}>
              <HGrip />
              <Cell $h={1.500} />
              <Tools names={["layers", "sheetBlue", "dim", "copy", "arc", "zoomBox", "zoomPrev", "scale", "eraseX"]} h={18.600} />
            </VBar>
          </Workspace>
          <Command>
            <CmdSide>
              <HGrip />
              <Icon n="close" s={11} />
              <Icon n="wrench" s={13} />
            </CmdSide>
            <CmdMain>
              <CmdLog>
                <div>命令:</div>
                <div>命令:  *取消*</div>
              </CmdLog>
              <CmdInput>
                <Icon n="prompt" s={13} />
                <Cell $w={12}><svg width="6" height="4" viewBox="0 0 6 4"><path d="M0 0h6L3 4z" fill="#555" /></svg></Cell>
                键入命令
              </CmdInput>
            </CmdMain>
          </Command>
        </Center>

        <Palette>
          <PalTitle />
          <PalBody>
            <PalMain>
              <PalTools>
                <PalCell><svg width="7" height="6" viewBox="0 0 7 6"><path d="M0 .5h1.500M2.500.5H7M0 3h1.500M2.500 3H7M0 5.500h1.500M2.500 5.500H7" stroke="#777" /></svg></PalCell>
                <PalCell $on><svg width="7" height="6" viewBox="0 0 7 6"><path d="M0 0h3v2.500H0zM4 0h3v2.500H4zM0 3.500h3V6H0zM4 3.500h3V6H4z" fill="#aaa" /></svg></PalCell>
                <PalCell><svg width="6" height="7" viewBox="0 0 6 7"><path d="M3 0a2.600 2.600 0 012.600 2.600C5.600 4.500 3 7 3 7S.4 4.500.4 2.600A2.600 2.600 0 013 0z" fill="#777" /><circle cx="3" cy="2.600" r="1" fill="#444" /></svg></PalCell>
              </PalTools>
              {["铁路", "火车站附属", "城际公路", "城市道路", "乡村道路"].map(t => <PalRow key={t} $on={t === "乡村道路"}>{t}</PalRow>)}
              <Symbols>
                {SYMBOLS.map(([label, dots, art], i) => (
                  <Symbol key={i} $mid={!dots}>
                    <svg width="44" height="44" viewBox="0 0 44 44">{art}</svg>
                    <div>{label}<span>{dots}</span></div>
                  </Symbol>
                ))}
              </Symbols>
              {["道路附属", "桥梁", "渡口码头", "航行标志"].map(t => <PalRow key={t}>{t}</PalRow>)}
              <Cell $h={4} />
            </PalMain>
            <Side>
              <SideHead />
              {SIDE_TABS.map(t => <SideTab key={t} $on={t === "交通设施"}>{t}</SideTab>)}
            </Side>
          </PalBody>
        </Palette>
      </Body>

      <Status>
        <LayoutTabs>
          <LayoutTab $w={37} $on>模型</LayoutTab>
          <LayoutTab $w={54}>Layout1</LayoutTab>
          <LayoutTab $w={20}><svg width="7" height="7" viewBox="0 0 7 7"><path d="M3.500 0v7M0 3.500h7" stroke="#a9b0ba" strokeWidth="1.300" /></svg></LayoutTab>
        </LayoutTabs>
        <StatusGroup $w={65}><Cell $w={63}>比例  未定义</Cell></StatusGroup>
        <StatusGroup $w={79}>
          <Cell $w={25} $ml={1}>模型</Cell>
          <Cell $w={19}><Icon n="grid" s={13} /></Cell>
          <Cell $w={20}><Icon n="dotgrid" s={11} /></Cell>
          <Cell $w={13}><Icon n="tri" s={12} /></Cell>
        </StatusGroup>
        <StatusGroup $w={141}>
          <Cell $w={20} $ml={1}><Icon n="ortho" s={13} /></Cell>
          <Cell $h={19} $w={19} $ml={1} $on><Icon n="polar" /></Cell>
          <Cell $w={15}><Icon n="tri" s={12} /></Cell>
          <Cell $w={16}><Icon n="iso" s={13} /></Cell>
          <Cell $w={16}><Icon n="tri" s={12} /></Cell>
          <Cell $w={19} $h={19} $on><Icon n="snapTrack" /></Cell>
          <Cell $w={19} $h={19} $ml={1} $on><Icon n="osnap" /></Cell>
          <Cell $w={13}><Icon n="tri" s={12} /></Cell>
        </StatusGroup>
        <StatusGroup $w={89}>
          <Cell $w={19} $h={19} $ml={1.500} $on><Icon n="annoA" s={13} /></Cell>
          <Cell $w={20}><Icon n="annoB" s={13} /></Cell>
          <Cell $w={20}><Icon n="annoC" s={13} /></Cell>
          <Cell $w={15} $ml={1.500}>1:1</Cell>
          <Cell $w={10}><Icon n="tri" s={12} /></Cell>
        </StatusGroup>
        <StatusGroup $w={35}>
          <Cell $w={23}><Icon n="gear" s={13} /></Cell>
          <Cell $w={9}><Icon n="tri" s={12} /></Cell>
        </StatusGroup>
        <StatusGroup $w={20}><Cell><Icon n="plus" s={13} /></Cell></StatusGroup>
        <StatusGroup $w={24}><Cell $w={23}><Icon n="shapes" /></Cell></StatusGroup>
        <StatusGroup $w={26}><Cell $w={25}><Icon n="perf" s={13} /></Cell></StatusGroup>
        <StatusGroup $w={42}>
          <Cell $w={22}><Icon n="full" s={13} /></Cell>
          <Cell $w={19}><Icon n="burger" s={13} /></Cell>
        </StatusGroup>
      </Status>
      <Strip />
    </Page>
  );
}
